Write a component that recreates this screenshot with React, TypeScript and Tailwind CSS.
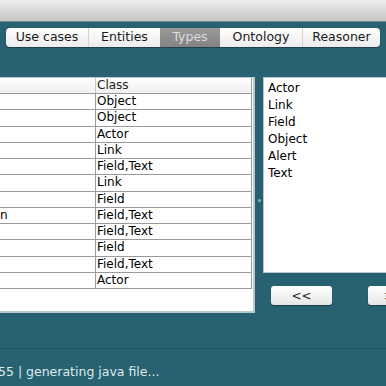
const tabs = ["Use cases", "Entities", "Types", "Ontology", "Reasoner"];

const rows: { name: string; cls: string }[] = [
  { name: "", cls: "Object" },
  { name: "", cls: "Object" },
  { name: "", cls: "Actor" },
  { name: "", cls: "Link" },
  { name: "", cls: "Field,Text" },
  { name: "", cls: "Link" },
  { name: "", cls: "Field" },
  { name: "n", cls: "Field,Text" },
  { name: "", cls: "Field,Text" },
  { name: "", cls: "Field" },
  { name: "", cls: "Field,Text" },
  { name: "", cls: "Actor" },
];

const types = ["Actor", "Link", "Field", "Object", "Alert", "Text"];

export default function App() {
  return (
    <div
      className="flex h-[386px] w-[386px] flex-col overflow-hidden bg-[#286171] text-[12px] text-black"
      style={{ fontFamily: '"DejaVu Sans", sans-serif' }}
    >
      {/* window chrome */}
      <div className="h-[22px] shrink-0 border-b border-[#7d8a8e] bg-gradient-to-b from-[#eeeeee] to-[#c6c6c6]" />

      {/* tabs */}
      <div className="flex shrink-0 pl-[6px] pt-[6px]">
        <div className="flex h-[19px] w-[374px] overflow-hidden rounded-[4px] bg-gradient-to-b from-white to-[#ececec] text-[12.5px] shadow-[0_1px_1px_rgba(0,0,0,0.35)]">
          {tabs.map((t, i) => {
            const active = t === "Types";
            const widths = ["w-[82px]", "w-[72px]", "w-[60px]", "w-[82px]", "w-[78px]"];
            return (
              <div
                key={t}
                className={`flex items-center justify-center leading-none ${widths[i]} ${
                  active
                    ? "bg-gradient-to-b from-[#9a9a9a] to-[#838383] text-[#dcdcdc]"
                    : "text-[#1a1a1a]"
                } ${i > 0 && !active && tabs[i - 1] !== "Types" ? "border-l border-[#d4d4d4]" : ""}`}
              >
                {t}
              </div>
            );
          })}
        </div>
      </div>

      {/* content */}
      <div className="mt-[30px] flex shrink-0">
        <div className="h-[236px] w-[255px] shrink-0 border-r-2 border-b-2 border-t border-[#b5c9ce] bg-white">
          <div className="w-[252px] border-r border-[#9a9a9a]">
            <div className="flex h-[16px] border-b border-[#9a9a9a] bg-gradient-to-b from-white to-[#f0f0f0] leading-[15px] text-[#222]">
              <div className="w-[96px] border-r border-[#c8c8c8]" />
              <div className="pl-[1px]">Class</div>
            </div>
            {rows.map((r, i) => (
              <div key={i} className="flex h-[16.25px] border-b border-[#9a9a9a] leading-[15px]">
                <div className="w-[96px] overflow-hidden border-r border-[#9a9a9a]">{r.name}</div>
                <div className="pl-[1px]">{r.cls}</div>
              </div>
            ))}
          </div>
        </div>

        <div className="flex w-[8px] shrink-0 items-center justify-center pt-[10px]">
          <div className="h-[3px] w-[3px] rounded-full bg-[#8fb0b8]" />
        </div>

        <div className="flex min-w-0 flex-1 flex-col">
          <div className="h-[196px] border border-r-0 border-[#b5c9ce] bg-white pl-[4px] pt-[2px]">
            {types.map((t) => (
              <div key={t} className="h-[17px] leading-[17px]">
                {t}
              </div>
            ))}
          </div>
          <div className="mt-[13px] flex">
            <div className="ml-[8px] flex h-[19px] w-[61px] shrink-0 items-center justify-center rounded-[3px] bg-gradient-to-b from-white to-[#e6e6e6] text-[#222] shadow-[0_1px_1px_rgba(0,0,0,0.35)]">
              &lt;&lt;
            </div>
            <div className="ml-[36px] flex h-[19px] w-[61px] shrink-0 items-center justify-start rounded-[3px] bg-gradient-to-b from-white to-[#e6e6e6] pl-[16px] text-[#222] shadow-[0_1px_1px_rgba(0,0,0,0.35)]">
              &gt;&gt;
            </div>
          </div>
        </div>
      </div>

      {/* status */}
      <div className="mt-[35px] shrink-0 border-t border-[#1f5361] pt-[16px] text-[12.5px] leading-[14px] text-[#dfeaec]">
        <div className="-ml-[2px] whitespace-nowrap">55 | generating java file...</div>
      </div>
    </div>
  );
}
